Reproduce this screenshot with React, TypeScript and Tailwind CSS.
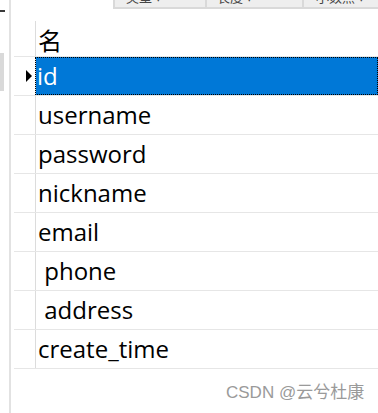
import React from "react";

const rows = ["id", "username", "password", "nickname", "email", " phone", " address", "create_time"];

export default function App() {
  return (
    <div className="relative flex h-[413px] w-[378px] overflow-hidden bg-white font-['Open_Sans','Noto_Sans_CJK_SC',sans-serif] text-black">
      {/* left strip */}
      <div className="relative w-[11px] shrink-0 border-r-2 border-[#e2e2e2]">
        <div className="mt-[10px] h-[2px] w-[5px] bg-[#3a3a3a]" />
        <div className="mt-[41px] h-[38px] w-[4px] bg-[#d9d9d9]" />
      </div>

      <div className="flex flex-1 flex-col pl-[3px]">
        {/* top toolbar (cut off) */}
        <div className="ml-[99px] flex h-[9px] border-b-2 border-[#d9d9d9] bg-[#eeeeee] text-[13px] leading-[16px] text-[#444]">
          <div className="w-[92px] overflow-hidden border-l-2 border-[#d9d9d9] pl-[11px]">
            <span className="-mt-[11px] block">类型 ▾</span>
          </div>
          <div className="w-[97px] overflow-hidden border-l-2 border-[#d9d9d9] pl-[10px]">
            <span className="-mt-[11px] block">长度 ▾</span>
          </div>
          <div className="flex-1 overflow-hidden border-l-2 border-[#d9d9d9] pl-[12px]">
            <span className="-mt-[11px] block">小数点 ▾</span>
          </div>
        </div>

        {/* grid */}
        <div className="mt-[12px] flex flex-col">
          <div className="flex h-[36px] border-b border-[#e6e6e6]">
            <div className="w-[21px] shrink-0" />
            <div className="flex-1 border-l border-[#dcdcdc] pl-[2px] text-[24px] leading-[38px] font-['Noto_Sans_CJK_SC',sans-serif]">
              名
            </div>
          </div>
          {rows.map((name, i) => (
            <div key={i} className="flex h-[39px] border-b border-[#e6e6e6]">
              <div className="flex w-[21px] shrink-0 items-center justify-end pr-[3px]">
                {i === 0 && (
                  <svg width="6" height="12" viewBox="0 0 6 12">
                    <path d="M0 0 L6 6 L0 12 Z" fill="#000" />
                  </svg>
                )}
              </div>
              <div
                className={
                  i === 0
                    ? "flex flex-1 items-center whitespace-pre border-l border-[#dcdcdc] bg-[#0078d7] pl-[1px] text-[24px] text-white outline-1 -outline-offset-1 outline-dotted outline-black"
                    : "flex flex-1 items-center whitespace-pre border-l border-[#dcdcdc] pl-[2px] text-[24px]"
                }
              >
                {name}
              </div>
            </div>
          ))}
        </div>
      </div>

      <div className="absolute left-[226px] top-[383px] text-[17px] leading-[20px] text-[#9a9a9a] font-['Liberation_Sans','Noto_Sans_CJK_SC',sans-serif]">
        CSDN @云兮杜康
      </div>
    </div>
  );
}
